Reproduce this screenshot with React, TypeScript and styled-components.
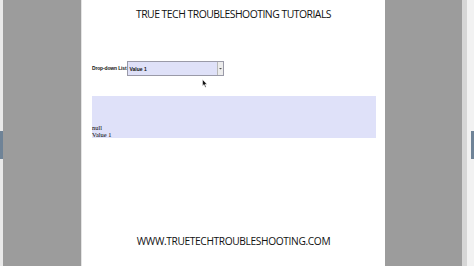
import styled, { createGlobalStyle } from "styled-components";

const GlobalStyle = createGlobalStyle`
  html, body {
    margin: 0;
    padding: 0;
    width: 474px;
    height: 266px;
    overflow: hidden;
    background: #ffffff;
  }
`;

const Screen = styled.div`
  position: relative;
  display: flex;
  width: 474px;
  height: 266px;
`;

const Edge = styled.div<{ w: number; bg: string }>`
  width: ${(p) => p.w}px;
  flex-shrink: 0;
  background: ${(p) => p.bg};
`;

const Gutter = styled.div<{ w: number }>`
  width: ${(p) => p.w}px;
  flex-shrink: 0;
  background: #9c9c9c;
`;

const Page = styled.div`
  width: 304px;
  flex-shrink: 0;
  background: #ffffff;
  border-left: 1px solid #e4e4e4;
  display: flex;
  flex-direction: column;
  align-items: stretch;
  padding: 8px 10px 0 10px;
  box-sizing: border-box;
  font-family: "Open Sans", "Liberation Sans", sans-serif;
  color: #222;
`;

const Heading = styled.div`
  text-align: center;
  font-size: 10.4px;
  letter-spacing: -0.5px;
  line-height: 13px;
  color: #111;
`;

const FieldRow = styled.div`
  display: flex;
  align-items: center;
  margin-top: 40px;
  gap: 1px;
`;

const FieldLabel = styled.span`
  font-family: "Liberation Sans", sans-serif;
  font-size: 4.9px;
  font-weight: bold;
  letter-spacing: -0.1px;
  color: #111;
`;

const Select = styled.div`
  position: relative;
  width: 97px;
  height: 15px;
  box-sizing: border-box;
  border: 1px solid #9a9aa8;
  background: #dfe1f8;
  display: flex;
  align-items: center;
  padding-left: 1px;
  font-family: "Liberation Sans", sans-serif;
  font-size: 5px;
  font-weight: bold;
  color: #111;
`;

const SelectText = styled.span`
  flex: 1;
`;

const SelectButton = styled.div`
  width: 5px;
  height: 100%;
  border-left: 1px solid #b8b8b8;
  background: #ececec;
  display: flex;
  align-items: center;
  justify-content: center;
`;

const Cursor = styled.svg`
  position: absolute;
  left: 202px;
  top: 79px;
`;

const Output = styled.div`
  margin-top: 20px;
  height: 42px;
  width: 284px;
  background: #dfe1f9;
  display: flex;
  flex-direction: column;
  justify-content: flex-end;
  font-family: "Liberation Serif", serif;
  font-size: 6.4px;
  line-height: 6.5px;
  color: #000;
  box-sizing: border-box;
`;

const Footer = styled(Heading)`
  margin-top: 97px;
  font-size: 10.2px;
  letter-spacing: -0.36px;
`;

const Tab = styled.div<{ side: "left" | "right" }>`
  position: absolute;
  top: 131px;
  ${(p) => (p.side === "left" ? "left: 0;" : "right: 0;")}
  width: 3px;
  height: 28px;
  background: #6f8397;
`;

export default function App() {
  return (
    <>
      <GlobalStyle />
      <Screen>
        <Edge w={3} bg="#e9e9e9" />
        <Gutter w={78} />
        <Page>
          <Heading>TRUE TECH TROUBLESHOOTING TUTORIALS</Heading>
          <FieldRow>
            <FieldLabel>Drop-down List</FieldLabel>
            <Select>
              <SelectText>Value 1</SelectText>
              <SelectButton>
                <svg width="3" height="3" viewBox="0 0 3 3">
                  <path d="M0 1 L3 1 L1.5 2.6 Z" fill="#555" />
                </svg>
              </SelectButton>
            </Select>
          </FieldRow>
          <Output>
            <span>null</span>
            <span>Value 1</span>
          </Output>
          <Footer>WWW.TRUETECHTROUBLESHOOTING.COM</Footer>
        </Page>
        <Gutter w={77} />
        <Edge w={5} bg="#d6d6d6" />
        <Edge w={7} bg="#f2f2f2" />
        <Tab side="left" />
        <Tab side="right" />
        <Cursor width="6" height="9" viewBox="0 0 6 9">
          <path d="M0.5 0.5 L0.5 7 L2 5.6 L3.2 8.3 L4.2 7.9 L3 5.3 L5 5.2 Z" fill="#111" stroke="#fff" strokeWidth="0.5" />
        </Cursor>
      </Screen>
    </>
  );
}
